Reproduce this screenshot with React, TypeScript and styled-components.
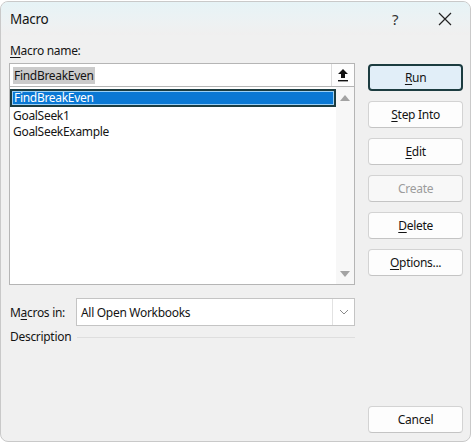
import React from "react";
import styled, { createGlobalStyle } from "styled-components";

const Global = createGlobalStyle`
  html, body {
    margin: 0;
    padding: 0;
    background: #ffffff;
  }
  body {
    font-family: "Noto Sans", "Open Sans", sans-serif;
    font-size: 12px;
    letter-spacing: -0.3px;
    color: #141414;
  }
`;

const Window = styled.div`
  box-sizing: border-box;
  width: 471px;
  height: 441px;
  margin-top: 1px;
  border: 1px solid #c9c9c9;
  border-radius: 8px;
  background: #f0f0f0;
  overflow: hidden;
  display: flex;
  flex-direction: column;
`;

const TitleBar = styled.div`
  height: 33px;
  display: flex;
  align-items: center;
  padding-left: 9px;
  background: linear-gradient(#e6f3f6, #eef1f2 70%, #f0efef);
  font-size: 13.5px;
`;

const TitleText = styled.div`
  flex: 1;
`;

const TitleButton = styled.div`
  width: 50px;
  height: 33px;
  display: flex;
  align-items: center;
  justify-content: center;
  font-size: 15px;
  color: #333;
`;

const Body = styled.div`
  flex: 1;
  display: flex;
  padding: 7px 7px 8px 8px;
  gap: 13px;
`;

const LeftCol = styled.div`
  width: 347px;
  display: flex;
  flex-direction: column;
`;

const RightCol = styled.div`
  width: 95px;
  display: flex;
  flex-direction: column;
  gap: 10px;
  padding-top: 22px;
`;

const Label = styled.div`
  height: 21px;
  line-height: 17px;
  padding-left: 1px;
`;

const U = styled.span`
  text-decoration: underline;
  text-underline-offset: 2px;
`;

const NameBox = styled.div`
  box-sizing: border-box;
  height: 24px;
  border: 1px solid #b5b5b5;
  background: #fff;
  display: flex;
  align-items: center;
`;

const NameText = styled.div`
  flex: 1;
  padding-left: 3px;
  display: flex;
  align-items: center;
`;

const Highlight = styled.span`
  background: #cbcbcb;
  padding: 0 1px;
  line-height: 17px;
`;

const SideButton = styled.div`
  box-sizing: border-box;
  width: 23px;
  height: 22px;
  border-left: 1px solid #dcdcdc;
  display: flex;
  align-items: center;
  justify-content: center;
  background: #fdfdfd;
`;

const ListBox = styled.div`
  box-sizing: border-box;
  height: 198px;
  border: 1px solid #b5b5b5;
  border-top: none;
  background: #fff;
  display: flex;
`;

const Items = styled.div`
  flex: 1;
  padding-top: 2px;
`;

const Item = styled.div<{ $selected?: boolean }>`
  box-sizing: border-box;
  height: ${(p) => (p.$selected ? "18px" : "16px")};
  line-height: ${(p) => (p.$selected ? "14px" : "17px")};
  padding-left: ${(p) => (p.$selected ? "2px" : "3px")};
  color: ${(p) => (p.$selected ? "#ffffff" : "#141414")};
  background: ${(p) => (p.$selected ? "#0a78d4" : "transparent")};
  border: ${(p) => (p.$selected ? "2px solid #1c3c40" : "none")};
  outline: ${(p) => (p.$selected ? "1px solid #9ad0f5" : "none")};
  outline-offset: -3px;
`;

const ScrollBar = styled.div`
  width: 18px;
  background: #f7f7f7;
  display: flex;
  flex-direction: column;
  justify-content: space-between;
  align-items: center;
  padding: 8px 0 7px;
`;

const Row = styled.div`
  display: flex;
  align-items: center;
  margin-top: 13px;
`;

const RowLabel = styled.div`
  width: 66px;
  padding-left: 1px;
`;

const SelectBox = styled.div`
  box-sizing: border-box;
  flex: 1;
  height: 28px;
  border: 1px solid #c4c4c4;
  background: #fff;
  display: flex;
  align-items: center;
`;

const SelectText = styled.div`
  flex: 1;
  padding-left: 4px;
`;

const Chevron = styled.div`
  box-sizing: border-box;
  width: 22px;
  height: 26px;
  border-left: 1px solid #e2e2e2;
  display: flex;
  align-items: center;
  justify-content: center;
`;

const Description = styled.div`
  display: flex;
  align-items: center;
  gap: 6px;
  margin-top: 2px;
  padding-left: 1px;
  &::after {
    content: "";
    flex: 1;
    height: 1px;
    background: #dedede;
    margin-top: 2px;
  }
`;

const Button = styled.div<{ $default?: boolean; $disabled?: boolean }>`
  box-sizing: border-box;
  height: 27px;
  display: flex;
  align-items: center;
  justify-content: center;
  border-radius: 4px;
  border: ${(p) => (p.$default ? "2px solid #1c3c40" : "1px solid #d3d3d3")};
  background: ${(p) => (p.$default ? "#e1eef8" : p.$disabled ? "#f8f8f8" : "#fdfdfd")};
  color: ${(p) => (p.$disabled ? "#9c9c9c" : "#141414")};
  border-bottom-color: ${(p) => (p.$default ? "#1c3c40" : "#c4c4c4")};
`;

const Spacer = styled.div`
  flex: 1;
`;

function ArrowUp() {
  return (
    <svg width="12" height="14" viewBox="0 0 12 14">
      <path d="M6 1 L11 6 L8 6 L8 10 L4 10 L4 6 L1 6 Z" fill="#111" />
      <rect x="1" y="12" width="10" height="1.4" fill="#111" />
    </svg>
  );
}

function Tri({ down }: { down?: boolean }) {
  return (
    <svg width="10" height="6" viewBox="0 0 10 6">
      <path d={down ? "M0 0 L10 0 L5 6 Z" : "M0 6 L10 6 L5 0 Z"} fill="#a3a3a3" />
    </svg>
  );
}

function ChevronDown() {
  return (
    <svg width="10" height="6" viewBox="0 0 10 6">
      <path d="M1 1 L5 5 L9 1" fill="none" stroke="#8a8a8a" strokeWidth="1" />
    </svg>
  );
}

function CloseX() {
  return (
    <svg width="14" height="14" viewBox="0 0 14 14">
      <path d="M1 1 L13 13 M13 1 L1 13" stroke="#222" strokeWidth="1.2" />
    </svg>
  );
}

const macros = ["FindBreakEven", "GoalSeek1", "GoalSeekExample"];

export default function App() {
  return (
    <>
      <Global />
      <Window>
        <TitleBar>
          <TitleText>Macro</TitleText>
          <TitleButton>?</TitleButton>
          <TitleButton>
            <CloseX />
          </TitleButton>
        </TitleBar>
        <Body>
          <LeftCol>
            <Label>
              <U>M</U>acro name:
            </Label>
            <NameBox>
              <NameText>
                <Highlight>FindBreakEven</Highlight>
              </NameText>
              <SideButton>
                <ArrowUp />
              </SideButton>
            </NameBox>
            <ListBox>
              <Items>
                {macros.map((m, i) => (
                  <Item key={m} $selected={i === 0}>
                    {m}
                  </Item>
                ))}
              </Items>
              <ScrollBar>
                <Tri />
                <Tri down />
              </ScrollBar>
            </ListBox>
            <Row>
              <RowLabel>
                M<U>a</U>cros in:
              </RowLabel>
              <SelectBox>
                <SelectText>All Open Workbooks</SelectText>
                <Chevron>
                  <ChevronDown />
                </Chevron>
              </SelectBox>
            </Row>
            <Description>Description</Description>
          </LeftCol>
          <RightCol>
            <Button $default>
              <span>
                <U>R</U>un
              </span>
            </Button>
            <Button>
              <span>
                <U>S</U>tep Into
              </span>
            </Button>
            <Button>
              <span>
                <U>E</U>dit
              </span>
            </Button>
            <Button $disabled>Create</Button>
            <Button>
              <span>
                <U>D</U>elete
              </span>
            </Button>
            <Button>
              <span>
                <U>O</U>ptions...
              </span>
            </Button>
            <Spacer />
            <Button>Cancel</Button>
          </RightCol>
        </Body>
      </Window>
    </>
  );
}
